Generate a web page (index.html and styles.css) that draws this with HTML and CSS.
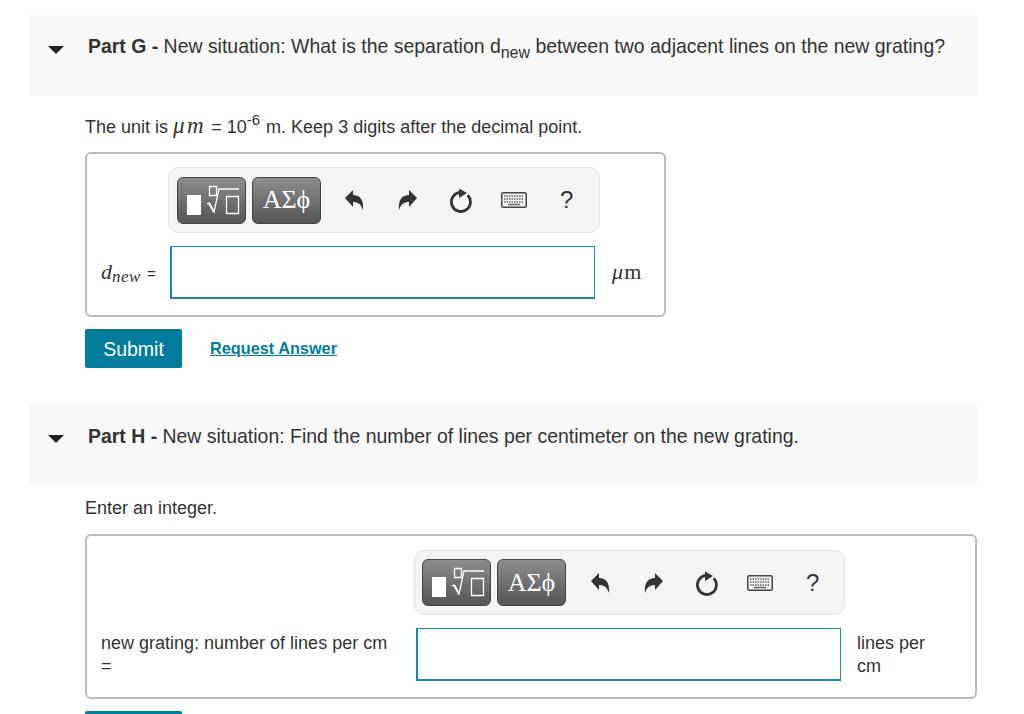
FILE: index.html
```html
<!DOCTYPE html>
<html lang="en">

<head>
  <meta charset="UTF-8">
  <meta name="viewport" content="width=device-width, initial-scale=1.0">
  <title>Part G and Part H</title>
  <link rel="stylesheet" href="styles.css">
</head>

<body>
  <svg class="icon-defs" width="0" height="0">
    <symbol id="icon-templates" viewBox="0 0 69 47">
      <rect x="10" y="18" width="14" height="20" fill="#fff"/>
      <path d="M30 27l2-1 5 9 5-23h20M32.500 9.500h7v9h-7zM49.500 19.500h12v17h-12z" fill="none" stroke="#fff" stroke-width="1.300"/>
      <path d="M32 26l5 9" fill="none" stroke="#fff" stroke-width="2"/>
    </symbol>
    <symbol id="icon-undo" viewBox="0 0 20 22">
      <path d="M0 9L8 1v5c7 0 11 5 10 15-2-6-5-8-10-8v5z" fill="#333"/>
    </symbol>
    <symbol id="icon-redo" viewBox="0 0 20 22">
      <path d="M20 9l-8-8v5C5 6 1 11 2 21c2-6 5-8 10-8v5z" fill="#333"/>
    </symbol>
    <symbol id="icon-reset" viewBox="0 0 24 26">
      <path d="M11 5.500A9.500 9.500 0 1 0 18.700 8.300" fill="none" stroke="#333" stroke-width="2.800"/>
      <path d="M10 1.500l8 4.500-8 5z" fill="#333"/>
    </symbol>
    <symbol id="icon-keyboard" viewBox="0 0 26 16">
      <rect x="0.750" y="0.750" width="24.500" height="14.500" rx="1.500" fill="#f4f4f4" stroke="#444" stroke-width="1.500"/>
      <path d="M3 4h20M3 7h20M3 10h20" stroke="#666" stroke-width="1.500" stroke-dasharray="1.500 1"/>
      <path d="M7 12.500h12" stroke="#666" stroke-width="1.500"/>
    </symbol>
  </svg>

  <div class="page">
    <div class="part-head">
      <span class="caret"></span>
      <h2><b>Part G -</b> New situation: What is the separation d<sub>new</sub> between two adjacent lines on the new grating?</h2>
    </div>
    <div class="part-body part-g">
      <p class="hint">The unit is <i class="math">μm</i> = 10<sup>-6</sup> m. Keep 3 digits after the decimal point.</p>
      <div class="answer answer-g">
        <div class="toolbar">
          <button class="tool-btn" type="button"><svg width="69" height="47"><use href="#icon-templates"/></svg></button>
          <button class="tool-btn symbols" type="button">ΑΣϕ</button>
          <span class="tools">
            <svg class="undo" width="20" height="22"><use href="#icon-undo"/></svg>
            <svg class="redo" width="20" height="22"><use href="#icon-redo"/></svg>
            <svg class="reset" width="24" height="26"><use href="#icon-reset"/></svg>
            <svg class="keyboard" width="26" height="16"><use href="#icon-keyboard"/></svg>
            <span class="help">?</span>
          </span>
        </div>
        <label class="field-label math-label"><i>d<sub>new</sub></i><span class="equals">=</span></label>
        <div class="field"></div>
        <span class="unit math-unit"><i>μ</i>m</span>
      </div>
      <div class="actions">
        <button class="submit" type="button">Submit</button>
        <a class="request" href="#">Request Answer</a>
      </div>
    </div>

    <div class="part-head part-head-h">
      <span class="caret"></span>
      <h2><b>Part H -</b> New situation: Find the number of lines per centimeter on the new grating.</h2>
    </div>
    <div class="part-body">
      <p class="hint">Enter an integer.</p>
      <div class="answer answer-h">
        <div class="toolbar">
          <button class="tool-btn" type="button"><svg width="69" height="47"><use href="#icon-templates"/></svg></button>
          <button class="tool-btn symbols" type="button">ΑΣϕ</button>
          <span class="tools">
            <svg class="undo" width="20" height="22"><use href="#icon-undo"/></svg>
            <svg class="redo" width="20" height="22"><use href="#icon-redo"/></svg>
            <svg class="reset" width="24" height="26"><use href="#icon-reset"/></svg>
            <svg class="keyboard" width="26" height="16"><use href="#icon-keyboard"/></svg>
            <span class="help">?</span>
          </span>
        </div>
        <label class="field-label">new grating: number of lines per cm =</label>
        <div class="field"></div>
        <span class="unit">lines per cm</span>
      </div>
      <div class="actions">
        <button class="submit" type="button" aria-label="Submit"></button>
      </div>
    </div>
  </div>
</body>

</html>
```

FILE: styles.css
```css
html,
body {
  height: 714px;
  margin: 0;
  overflow: hidden;
}

body {
  background-color: white;
  color: #333;
  font-family: "Liberation Sans", Arial, sans-serif;
}

.icon-defs {
  position: absolute;
}

.page {
  padding: 15px 47px 0 29px;
}

.part-head {
  display: flex;
  height: 81px;
  box-sizing: border-box;
  padding: 18px 0 0 19px;
  background-color: #f8f8f8;
}

.part-head-h {
  height: 80px;
}

.part-head-h h2 {
  margin-top: 1px;
}

.caret {
  width: 0;
  height: 0;
  margin: 13px 24px 0 0;
  border-top: 8px solid #222;
  border-left: 8px solid transparent;
  border-right: 8px solid transparent;
}

h2 {
  margin: 0;
  font-size: 19.450px;
  font-weight: normal;
  line-height: 26px;
}

h2 sub {
  font-size: 16px;
  line-height: 0;
  vertical-align: -5px;
}

.part-body {
  padding: 11px 0 36px 56px;
}

.part-g {
  padding-top: 18px;
}

.hint {
  margin: 0 0 13px 0;
  font-size: 18px;
  line-height: 26px;
}

.part-g .hint {
  margin-bottom: 12px;
}

.hint sup {
  margin-right: 1px;
  font-size: 15px;
  line-height: 0;
  vertical-align: 8px;
}

.math {
  font-family: "Liberation Serif", serif;
  font-size: 23px;
  line-height: 0;
  letter-spacing: 2.500px;
}

.answer {
  display: grid;
  box-sizing: border-box;
  align-items: center;
  row-gap: 13px;
  padding: 13px 0 16px 14px;
  border: 2px solid #bbb;
  border-radius: 6px;
}

.answer-g {
  width: 581px;
  grid-template-columns: 69px 425px auto;
}

.answer-h {
  grid-template-columns: 315px 425px auto;
  padding-top: 14px;
}

.toolbar {
  grid-column: 2 / 4;
  display: flex;
  box-sizing: border-box;
  align-items: center;
  width: 432px;
  height: 66px;
  margin-left: -2px;
  padding-left: 8px;
  border: 1px solid #e4e4e4;
  border-radius: 10px;
  background-color: #f4f4f4;
}

.answer-h .toolbar {
  width: 431px;
  height: 65px;
  padding-left: 7px;
}

.tool-btn {
  width: 69px;
  height: 47px;
  box-sizing: border-box;
  margin-right: 6px;
  padding: 0;
  border: 1px solid #444;
  border-radius: 6px;
  background: linear-gradient(#8d8d8f, #555);
  color: white;
}

.tool-btn svg {
  display: block;
  margin: -1px;
}

.symbols {
  font-family: "Liberation Serif", serif;
  font-size: 26px;
}

.tools {
  display: flex;
  align-items: center;
  margin-left: 18px;
}

.answer-h .tools {
  margin-left: 19px;
}

.redo {
  margin-left: 32px;
}

.reset {
  margin-left: 32px;
}

.keyboard {
  margin-left: 28px;
}

.help {
  margin-left: 33px;
  font-size: 24px;
}

.field-label {
  padding-right: 20px;
  font-size: 18px;
  line-height: 23px;
}

.math-label {
  padding: 0;
  white-space: nowrap;
  font-size: 15px;
}

.math-label i {
  font-family: "Liberation Serif", serif;
  font-size: 22px;
}

.math-label sub {
  font-size: 17px;
  line-height: 0;
  letter-spacing: 0.500px;
  vertical-align: -3px;
}

.equals {
  margin-left: 6px;
}

.field {
  height: 53px;
  box-sizing: border-box;
  border: 2px solid #1c8aa8;
  border-width: 1px 1px 2px 2px;
  background-color: white;
}

.unit {
  padding-left: 16px;
  padding-right: 30px;
  font-size: 18px;
  line-height: 23px;
}

.math-unit {
  padding: 0 0 2px 17px;
  font-family: "Liberation Serif", serif;
  font-size: 22px;
  letter-spacing: 1.300px;
}

.actions {
  display: flex;
  align-items: center;
  gap: 28px;
  margin-top: 12px;
}

.submit {
  width: 97px;
  height: 39px;
  padding: 2px 0 0 0;
  border: none;
  border-radius: 2px;
  background-color: #007d9c;
  color: white;
  font-family: inherit;
  font-size: 19.500px;
}

.request {
  color: #007d9c;
  font-size: 16.300px;
  font-weight: bold;
}
```
